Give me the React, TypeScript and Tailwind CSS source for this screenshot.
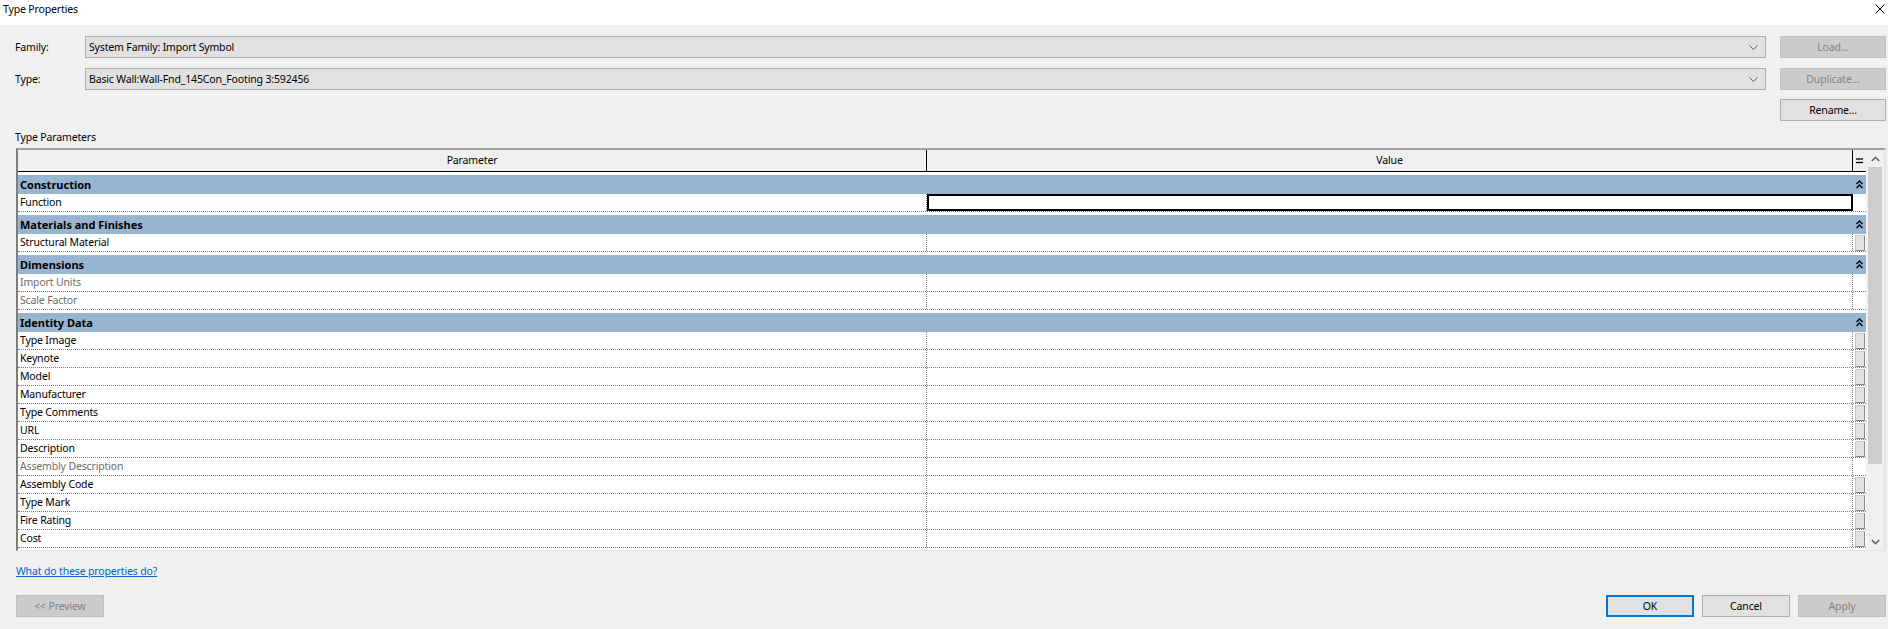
import React from "react";

type Row = { label: string; disabled?: boolean; editing?: boolean; btn?: boolean };
type Section = { name: string; rows: Row[] };

const sections: Section[] = [
  { name: "Construction", rows: [{ label: "Function", editing: true }] },
  { name: "Materials and Finishes", rows: [{ label: "Structural Material", btn: true }] },
  {
    name: "Dimensions",
    rows: [
      { label: "Import Units", disabled: true },
      { label: "Scale Factor", disabled: true },
    ],
  },
  {
    name: "Identity Data",
    rows: [
      { label: "Type Image", btn: true },
      { label: "Keynote", btn: true },
      { label: "Model", btn: true },
      { label: "Manufacturer", btn: true },
      { label: "Type Comments", btn: true },
      { label: "URL", btn: true },
      { label: "Description", btn: true },
      { label: "Assembly Description", disabled: true },
      { label: "Assembly Code", btn: true },
      { label: "Type Mark", btn: true },
      { label: "Fire Rating", btn: true },
      { label: "Cost", btn: true },
    ],
  },
];

function Chevron() {
  return (
    <svg width="9" height="5" viewBox="0 0 9 5" className="shrink-0">
      <polyline points="0.5,0.5 4.5,4.5 8.5,0.5" fill="none" stroke="#5a5a5a" strokeWidth="1" />
    </svg>
  );
}

function Combo({ value }: { value: string }) {
  return (
    <div className="flex h-[22px] flex-1 items-center justify-between border border-[#adadad] bg-[#e1e1e1] pl-[3px] pr-[7px]">
      <span>{value}</span>
      <Chevron />
    </div>
  );
}

function Btn({
  children,
  kind = "normal",
  className = "",
}: {
  children: React.ReactNode;
  kind?: "normal" | "disabled" | "default";
  className?: string;
}) {
  const look =
    kind === "disabled"
      ? "border border-[#bfbfbf] bg-[#cccccc] text-[#838383]"
      : kind === "default"
        ? "border-2 border-[#0078d7] bg-[#e1e1e1] text-black"
        : "border border-[#adadad] bg-[#e1e1e1] text-black";
  return (
    <div className={`flex h-[22px] items-center justify-center ${look} ${className}`}>
      {children}
    </div>
  );
}

function DoubleUp() {
  return (
    <svg width="7" height="9" viewBox="0 0 7 9">
      <polyline points="0.5,4 3.5,1 6.5,4" fill="none" stroke="#000" strokeWidth="1.4" />
      <polyline points="0.5,8 3.5,5 6.5,8" fill="none" stroke="#000" strokeWidth="1.4" />
    </svg>
  );
}

function SmallButton() {
  return (
    <div className="h-[16px] w-[10px] border border-t-[#c8c8c8] border-l-[#c8c8c8] border-r-[#8a8a8a] border-b-[#8a8a8a] bg-[#e1e1e1]" />
  );
}

function GroupRow({ name }: { name: string }) {
  return (
    <div className="pt-[3px]">
      <div className="flex h-[19px] items-center bg-[#99b4d1]">
        <div className="flex-1 pl-[2px] text-[11px] font-bold tracking-normal">{name}</div>
        <div className="flex w-[13px] justify-center">
          <DoubleUp />
        </div>
      </div>
    </div>
  );
}

function DataRow({ row }: { row: Row }) {
  return (
    <div className="flex h-[18px] border-b border-dotted border-[#7a7a7a]">
      <div
        className={`flex w-[909px] items-center border-r border-dotted border-[#7a7a7a] pl-[2px] ${row.disabled ? "text-[#6d6d6d]" : "text-black"}`}
      >
        {row.label}
      </div>
      {row.editing ? (
        <div className="w-[926px] border-2 border-black bg-white" />
      ) : (
        <div className="w-[926px] border-r border-dotted border-[#7a7a7a]" />
      )}
      <div className="flex w-[13px] items-center justify-center">{row.btn ? <SmallButton /> : null}</div>
    </div>
  );
}

function PropertyTable() {
  return (
    <div className="ml-px flex h-[403px] w-[1870px] border-t-2 border-b border-l-2 border-r-2 border-t-[#a0a0a0] border-b-[#e3e3e3] border-l-[#7d7d7d] border-r-[#e3e3e3] bg-white">
      <div className="w-[1848px] overflow-hidden">
        <div className="flex h-[22px] border-b border-black bg-[#f0f0f0]">
          <div className="flex w-[909px] items-center justify-center border-r border-black">Parameter</div>
          <div className="flex w-[926px] items-center justify-center border-r border-black">Value</div>
          <div className="flex w-[13px] items-center justify-center">
            <svg width="7" height="6" viewBox="0 0 7 6">
              <line x1="0" y1="1" x2="7" y2="1" stroke="#000" strokeWidth="1.3" />
              <line x1="0" y1="4.5" x2="7" y2="4.5" stroke="#000" strokeWidth="1.3" />
            </svg>
          </div>
        </div>
        {sections.map((s) => (
          <div key={s.name}>
            <GroupRow name={s.name} />
            {s.rows.map((r) => (
              <DataRow key={r.label} row={r} />
            ))}
          </div>
        ))}
      </div>
      <div className="flex w-[18px] flex-col bg-[#f0f0f0]">
        <div className="flex h-[17px] items-center justify-center">
          <svg width="9" height="6" viewBox="0 0 9 6">
            <polyline points="0.8,5 4.5,1.3 8.2,5" fill="none" stroke="#606060" strokeWidth="1.6" />
          </svg>
        </div>
        <div className="mx-[2px] h-[297px] bg-[#cdcdcd]" />
        <div className="flex-1" />
        <div className="flex h-[17px] items-center justify-center">
          <svg width="9" height="6" viewBox="0 0 9 6">
            <polyline points="0.8,1 4.5,4.7 8.2,1" fill="none" stroke="#606060" strokeWidth="1.6" />
          </svg>
        </div>
      </div>
    </div>
  );
}

export default function App() {
  return (
    <div
      className="h-[629px] w-[1888px] bg-[#f0f0f0] text-[10.5px] leading-none tracking-[-0.15px] text-black"
      style={{ fontFamily: '"Noto Sans", "Segoe UI", sans-serif' }}
    >
      <div className="flex h-[25px] items-center justify-between bg-white pl-[3px] pr-[3px]">
        <span className="-mt-[6px]">Type Properties</span>
        <svg width="10" height="10" viewBox="0 0 10 10" className="-mt-[8px]">
          <line x1="0.5" y1="0.5" x2="9.5" y2="9.5" stroke="#000" strokeWidth="1" />
          <line x1="9.5" y1="0.5" x2="0.5" y2="9.5" stroke="#000" strokeWidth="1" />
        </svg>
      </div>

      <div className="pl-[15px] pr-[2px]">
        <div className="mt-[11px] flex items-center">
          <div className="w-[70px]">Family:</div>
          <Combo value="System Family: Import Symbol" />
          <Btn kind="disabled" className="ml-[14px] w-[106px]">
            Load...
          </Btn>
        </div>
        <div className="mt-[10px] flex items-center">
          <div className="w-[70px]">Type:</div>
          <Combo value="Basic Wall:Wall-Fnd_145Con_Footing 3:592456" />
          <Btn kind="disabled" className="ml-[14px] w-[106px]">
            Duplicate...
          </Btn>
        </div>
        <div className="mt-[9px] flex justify-end">
          <Btn className="w-[106px]">Rename...</Btn>
        </div>
        <div className="mt-[8px] h-[16px] leading-[16px]">Type Parameters</div>
        <div className="mt-[3px]">
          <PropertyTable />
        </div>
        <div className="ml-px mt-[12px] h-[16px] leading-[16px]">
          <span className="text-[#0066cc] underline">What do these properties do?</span>
        </div>
        <div className="ml-px mt-[16px] flex items-center">
          <Btn kind="disabled" className="w-[88px]">
            &lt;&lt; Preview
          </Btn>
          <div className="flex-1" />
          <Btn kind="default" className="w-[88px]">
            OK
          </Btn>
          <Btn className="ml-[8px] w-[88px]">Cancel</Btn>
          <Btn kind="disabled" className="ml-[8px] w-[88px]">
            Apply
          </Btn>
        </div>
      </div>
    </div>
  );
}
